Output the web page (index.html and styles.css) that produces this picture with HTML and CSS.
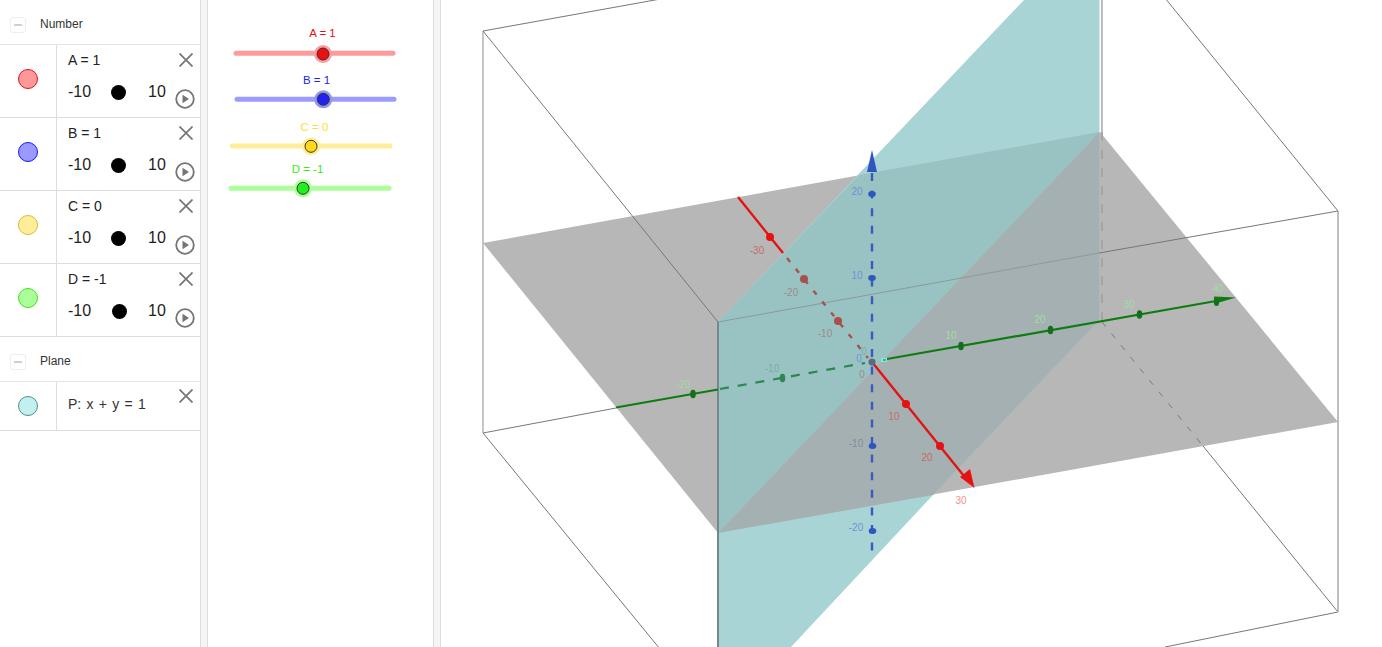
FILE: index.html
```html
<!DOCTYPE html>
<html lang="en">
<head>
<meta charset="utf-8">
<title>Planes in 3D</title>
<link rel="stylesheet" href="styles.css">
</head>
<body>
<div class="app">
  <aside class="algebra">
    <div class="group"><span class="toggle"><i></i></span><span class="group-name">Number</span></div>

    <div class="row">
      <div class="marble-cell"><span class="marble marble-a"></span></div>
      <div class="content">
        <div class="line-name"><span>A = 1</span>
          <svg class="close" viewBox="0 0 14 14"><path d="M0.5 0.5L13.5 13.5M13.5 0.5L0.5 13.5"/></svg></div>
        <div class="line-slider"><span class="min">-10</span><span class="dot"></span><span class="max">10</span>
          <svg class="play" viewBox="0 0 20 20"><circle cx="10" cy="10" r="8.8"/><path d="M7.5 5.8L14 10L7.5 14.2Z"/></svg></div>
      </div>
    </div>

    <div class="row">
      <div class="marble-cell"><span class="marble marble-b"></span></div>
      <div class="content">
        <div class="line-name"><span>B = 1</span>
          <svg class="close" viewBox="0 0 14 14"><path d="M0.5 0.5L13.5 13.5M13.5 0.5L0.5 13.5"/></svg></div>
        <div class="line-slider"><span class="min">-10</span><span class="dot"></span><span class="max">10</span>
          <svg class="play" viewBox="0 0 20 20"><circle cx="10" cy="10" r="8.8"/><path d="M7.5 5.8L14 10L7.5 14.2Z"/></svg></div>
      </div>
    </div>

    <div class="row">
      <div class="marble-cell"><span class="marble marble-c"></span></div>
      <div class="content">
        <div class="line-name"><span>C = 0</span>
          <svg class="close" viewBox="0 0 14 14"><path d="M0.5 0.5L13.5 13.5M13.5 0.5L0.5 13.5"/></svg></div>
        <div class="line-slider"><span class="min">-10</span><span class="dot"></span><span class="max">10</span>
          <svg class="play" viewBox="0 0 20 20"><circle cx="10" cy="10" r="8.8"/><path d="M7.5 5.8L14 10L7.5 14.2Z"/></svg></div>
      </div>
    </div>

    <div class="row">
      <div class="marble-cell"><span class="marble marble-d"></span></div>
      <div class="content">
        <div class="line-name"><span>D = -1</span>
          <svg class="close" viewBox="0 0 14 14"><path d="M0.5 0.5L13.5 13.5M13.5 0.5L0.5 13.5"/></svg></div>
        <div class="line-slider"><span class="min">-10</span><span class="dot dot-d"></span><span class="max max-d">10</span>
          <svg class="play" viewBox="0 0 20 20"><circle cx="10" cy="10" r="8.8"/><path d="M7.5 5.8L14 10L7.5 14.2Z"/></svg></div>
      </div>
    </div>

    <div class="group"><span class="toggle"><i></i></span><span class="group-name">Plane</span></div>

    <div class="row row-plane">
      <div class="marble-cell"><span class="marble marble-p"></span></div>
      <div class="content content-plane">
        <span class="formula">P: x + y = 1</span>
        <svg class="close close-plane" viewBox="0 0 14 14"><path d="M0.5 0.5L13.5 13.5M13.5 0.5L0.5 13.5"/></svg>
      </div>
    </div>
  </aside>

  <div class="splitter"></div>

  <section class="sliders">
    <svg class="canvas" viewBox="208 0 225 647" width="225" height="647">
      <text class="s-label la" x="322.5" y="37">A = 1</text>
      <line class="track ta" x1="236" y1="53.3" x2="393" y2="53.3"/>
      <circle class="halo ta-f" cx="323" cy="54" r="9"/><circle class="knob ka" cx="323" cy="54" r="6"/>

      <text class="s-label lb" x="316.5" y="84">B = 1</text>
      <line class="track tb" x1="237" y1="99.3" x2="394" y2="99.3"/>
      <circle class="halo tb-f" cx="323.3" cy="99.3" r="9"/><circle class="knob kb" cx="323.3" cy="99.3" r="6"/>

      <text class="s-label lc" x="314.5" y="131">C = 0</text>
      <line class="track tc" x1="232" y1="146" x2="390" y2="146"/>
      <circle class="halo tc-f" cx="311" cy="146.3" r="9"/><circle class="knob kc" cx="311" cy="146.3" r="6"/>

      <text class="s-label ld" x="307.5" y="173">D = -1</text>
      <line class="track td" x1="231" y1="188.3" x2="389" y2="188.3"/>
      <circle class="halo td-f" cx="303" cy="188.3" r="9"/><circle class="knob kd" cx="303" cy="188.3" r="6"/>
    </svg>
  </section>

  <div class="splitter"></div>

  <main class="view3d">
    <svg class="canvas" viewBox="441 0 941 647" width="941" height="647">
      <!-- box behind the planes -->
      <path class="edge" d="M483 31L666 -2M1165 -2L1338 211M483 433L616 408"/>
      <path class="edge edge-light" d="M483 31V433"/>
      <path class="edge" d="M483 433L660 649M1338 612L1165 647"/>
      <path class="edge" d="M1203 446L1338 612"/>

      <!-- planes -->
      <polygon class="grey" points="483,243 1100,132 1338,422 718,533"/>
      <polygon class="teal" points="718,322 1024,0 1099.500,0 1099.500,320 933,495 791,647 718,647"/>
      <polygon class="over-a" points="859,175 1099.500,132 718,533 718,322"/>
      <polygon class="over-b" points="1099.500,132 1099.500,320 933,495 718,533"/>

      <!-- box in front -->
      <path class="edge-wide-light" d="M1102 0V132"/>
      <path class="edge-back" d="M1102 132V322"/>
      <path class="edge-dash-thin" d="M1102 322L1203 446"/>
      <path class="edge-wide-right" d="M1338 211V612"/>
      <path class="edge-front" d="M718 322V647"/>
      <path class="edge" d="M718 322L483 31"/>
      <path class="edge-through" d="M718 322L859 296.700L1099 253"/>
      <path class="edge" d="M1099 253L1338 211"/>

      <!-- z axis -->
      <path class="z-dash" d="M872 173V556"/>
      <path class="z-arrow" d="M872 150L877 172H867Z"/>
      <ellipse class="z-tick" cx="872" cy="194" rx="3.800" ry="3"/>
      <ellipse class="z-tick" cx="872" cy="278" rx="3.800" ry="3"/>
      <ellipse class="z-tick" cx="872.500" cy="446" rx="3.800" ry="3"/>
      <ellipse class="z-tick" cx="872.500" cy="531" rx="3.800" ry="3"/>

      <!-- y axis -->
      <path class="y-solid" d="M616 407.500L718 389.500"/>
      <path class="y-dash" d="M720 389L865 363"/>
      <path class="y-solid" d="M887 359L1216 301"/>
      <path class="y-arrow" d="M1214 296.500L1236 297.500L1214 304Z"/>
      <ellipse class="y-tick" cx="693" cy="394" rx="2.800" ry="4.300"/>
      <ellipse class="y-tick-dim" cx="782.500" cy="378" rx="2.800" ry="4.300"/>
      <ellipse class="y-tick" cx="961" cy="346" rx="2.800" ry="4.300"/>
      <ellipse class="y-tick" cx="1050.500" cy="330" rx="2.800" ry="4.300"/>
      <ellipse class="y-tick" cx="1139.500" cy="314.500" rx="2.800" ry="4.300"/>
      <ellipse class="y-tick" cx="1216.500" cy="303" rx="2.500" ry="3"/>

      <!-- x axis -->
      <path class="x-solid" d="M738 197L783 253"/>
      <path class="x-dash" d="M787 258L868 358"/>
      <path class="x-solid" d="M872 362L968 481"/>
      <path class="x-arrow" d="M960 477L970 469L974.500 488Z"/>
      <circle class="x-tick" cx="770" cy="237" r="4"/>
      <circle class="x-tick-dim" cx="804" cy="279" r="4"/>
      <circle class="x-tick-dim" cx="838" cy="321" r="4"/>
      <circle class="x-tick" cx="906" cy="404" r="4"/>
      <circle class="x-tick" cx="940" cy="446" r="4"/>
      <circle class="origin" cx="872" cy="362" r="3.500"/>
      <rect class="marker" x="881" y="358" width="6" height="4"/>
      <path class="marker-line" d="M883 360H886"/>

      <!-- labels -->
      <text class="n nx" x="757" y="254">-30</text>
      <text class="n nx-dim" x="791" y="296">-20</text>
      <text class="n nx-dim" x="825" y="337">-10</text>
      <text class="n nx-dim" x="862" y="378">0</text>
      <text class="n nx" x="894" y="420">10</text>
      <text class="n nx" x="927" y="461">20</text>
      <text class="n nx-out" x="961" y="504">30</text>

      <text class="n nz" x="857" y="195">20</text>
      <text class="n nz" x="857" y="279">10</text>
      <text class="n nz" x="859" y="362">0</text>
      <text class="n nz-dim" x="856" y="447">-10</text>
      <text class="n nz" x="856" y="531">-20</text>

      <text class="n ny" x="683" y="388">-20</text>
      <text class="n ny-dim" x="772" y="372">-10</text>
      <text class="n ny-dim" x="864" y="355">0</text>
      <text class="n ny" x="951" y="339">10</text>
      <text class="n ny" x="1040" y="323">20</text>
      <text class="n ny" x="1129" y="308">30</text>
      <text class="n ny" x="1218" y="292">40</text>
    </svg>
  </main>
</div>
</body>
</html>
```

FILE: styles.css
```css
* { box-sizing: border-box; }
html, body { margin: 0; padding: 0; height: 100%; background: #fff; overflow: hidden; }
body { font-family: "Liberation Sans", Arial, sans-serif; color: #222; }

.app { display: flex; width: 1382px; height: 647px; }

/* Algebra panel */
.algebra { width: 200px; flex: none; background: #fff; }
.group { height: 45px; display: flex; align-items: center; padding-left: 10px; border-bottom: 1px solid #e4e4e4; }
.toggle { width: 16px; height: 16px; margin-top: 5px; border: 1px solid #eeeeee; border-radius: 3px; display: flex; align-items: center; justify-content: center; }
.toggle i { display: block; width: 8px; height: 2px; background: #cfcfcf; }
.group-name { margin-left: 14px; font-size: 12px; color: #333; line-height: 14px; margin-top: 4px; }

.row { display: flex; height: 73px; border-bottom: 1px solid #dedede; }
.row-plane { height: 49px; }
.marble-cell { width: 57px; flex: none; border-right: 1px solid #dedede; display: flex; align-items: center; justify-content: center; padding-right: 1px; }
.marble { width: 20px; height: 20px; border-radius: 50%; border: 1px solid; display: block; margin-top: -4px; }
.marble-a { background: #ff9999; border-color: #e0101a; }
.marble-b { background: #9999ff; border-color: #1a1aee; }
.marble-c { background: #ffee99; border-color: #e0b830; }
.marble-d { background: #aaff99; border-color: #44e022; }
.marble-p { background: #c2efef; border-color: #4f8f88; margin-top: 0; }

.content { flex: 1; min-width: 0; padding-left: 11px; }
.line-name { height: 30px; display: flex; align-items: center; justify-content: space-between; padding-right: 7px; font-size: 14px; line-height: 16px; }
.line-slider { height: 34px; display: flex; align-items: center; font-size: 16px; line-height: 18px; }
.min { width: 43px; flex: none; }
.dot { width: 15px; height: 15px; flex: none; border-radius: 50%; background: #000; }
.dot-d { margin-left: 1px; }
.max { width: 27px; margin-left: 22px; flex: none; }
.max-d { margin-left: 21px; }
.play { width: 20px; height: 20px; flex: none; margin-top: 13px; }
.play circle { fill: none; stroke: #757575; stroke-width: 1.8; }
.play path { fill: #757575; }
.close { width: 14px; height: 14px; flex: none; margin-top: -1px; }
.close path { fill: none; stroke: #757575; stroke-width: 1.7; }
.content-plane { display: flex; align-items: flex-start; justify-content: space-between; padding-right: 7px; }
.formula { font-size: 14px; line-height: 16px; margin-top: 14px; word-spacing: 1.4px; color: #333; }
.close-plane { margin-top: 7px; }

/* Dividers */
.splitter { width: 8px; flex: none; background: #f5f5f5; border-left: 1px solid #dcdcdc; border-right: 1px solid #dcdcdc; }

/* Slider panel */
.sliders { width: 225px; flex: none; background: #fff; overflow: hidden; }
.canvas { display: block; }
.s-label { font-family: "Liberation Sans", Arial, sans-serif; font-size: 11.500px; text-anchor: middle; }
.la { fill: #e81010; } .lb { fill: #2222ee; } .lc { fill: #ffdc33; } .ld { fill: #33ee11; }
.track { stroke-width: 5; stroke-linecap: round; }
.ta { stroke: #ff9a9a; } .tb { stroke: #9c9cff; } .tc { stroke: #ffee99; } .td { stroke: #aaff99; }
.ta-f { fill: #ff9a9a; } .tb-f { fill: #8f96f0; } .tc-f { fill: #ffee99; } .td-f { fill: #aaff99; }
.knob { stroke: #333; stroke-width: 1; }
.ka { fill: #e81010; } .kb { fill: #2222ee; } .kc { fill: #ffd916; } .kd { fill: #22ee22; }

/* 3D view */
.view3d { flex: 1; min-width: 0; overflow: hidden; background: #fff; }
.grey { fill: #b8b7b7; }
.teal { fill: #a9d4d5; }
.over-a { fill: #99c3c3; }
.over-b { fill: #a5b0b2; }
.edge { fill: none; stroke: #777; stroke-width: 1; }
.edge-light { fill: none; stroke: #8c8c8c; stroke-width: 1; }
.edge-through { fill: none; stroke: #8a9a9a; stroke-width: 1; }
.edge-dash-thin { fill: none; stroke: #7a7a7a; stroke-width: 1; stroke-dasharray: 6 9; }
.edge-wide-light { fill: none; stroke: #bdbdbd; stroke-width: 2; }
.edge-back { fill: none; stroke: #a4a6a6; stroke-width: 2; stroke-dasharray: 9 9; }
.edge-wide-right { fill: none; stroke: #a8a8a8; stroke-width: 1.500; }
.edge-front { fill: none; stroke: #76888a; stroke-width: 2; }

.z-dash { fill: none; stroke: #3a5abf; stroke-width: 2.400; stroke-dasharray: 8 9.600; }
.z-arrow, .z-tick { fill: #2f55c0; }
.y-solid { fill: none; stroke: #0d7d12; stroke-width: 2.200; }
.y-dash { fill: none; stroke: #2f8650; stroke-width: 2.200; stroke-dasharray: 9 9; }
.y-arrow { fill: #0d7d12; }
.y-tick { fill: #12701a; }
.y-tick-dim { fill: #2f8650; }
.x-solid { fill: none; stroke: #e21414; stroke-width: 2.400; }
.x-dash { fill: none; stroke: #a8524e; stroke-width: 2.400; stroke-dasharray: 5 9; }
.x-arrow, .x-tick { fill: #e61212; }
.x-tick-dim { fill: #a8504a; }
.origin { fill: #5c6a80; }
.marker { fill: #7fe8e0; }
.marker-line { fill: none; stroke: #0d7d12; stroke-width: 1; }

.n { font-family: "Liberation Sans", Arial, sans-serif; font-size: 10px; text-anchor: middle; }
.nx { fill: #c76c66; }
.nx-dim { fill: #a08a88; }
.nx-out { fill: #f88e8e; }
.nz { fill: #6f92d6; }
.nz-dim { fill: #808c9c; }
.ny { fill: #a2dca2; }
.ny-dim { fill: #74b0a0; }
```
